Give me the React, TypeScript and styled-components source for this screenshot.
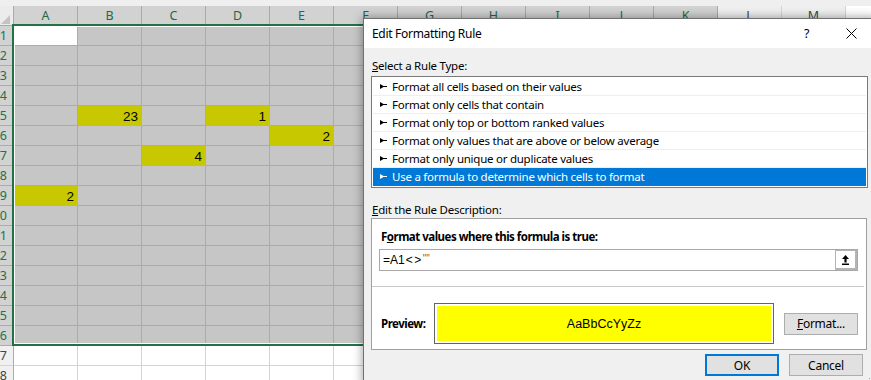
import React from "react";
import styled, { createGlobalStyle } from "styled-components";

const GlobalStyle = createGlobalStyle`
  html, body { margin: 0; padding: 0; }
  body {
    width: 871px; height: 380px; overflow: hidden; background: #ffffff;
    font-family: "Noto Sans", "Open Sans", sans-serif;
  }
`;

const COLS = ["A", "B", "C", "D", "E", "F", "G", "H", "I", "J", "K", "L", "M"];
const SEL_COLS = 11;
const ROWS = 18;
const SEL_ROWS = 16;
const VALUES: Record<string, number> = { B5: 23, D5: 1, E6: 2, C7: 4, A9: 2 };

const RULES = [
  "Format all cells based on their values",
  "Format only cells that contain",
  "Format only top or bottom ranked values",
  "Format only values that are above or below average",
  "Format only unique or duplicate values",
  "Use a formula to determine which cells to format",
];

const Screen = styled.div`
  position: relative;
  width: 871px;
  height: 380px;
  overflow: hidden;
  background: #ffffff;
`;

const TopStrip = styled.div`
  height: 6px;
  background: #efefef;
`;

const Sheet = styled.div`
  display: grid;
  grid-template-columns: 14px repeat(13, 64px);
  grid-auto-rows: 20px;
  font-family: "Noto Sans", sans-serif;
`;

const Corner = styled.div`
  box-sizing: border-box;
  background: #ececec;
  border-right: 1px solid #ababab;
  border-bottom: 1px solid #ababab;
  display: flex;
  align-items: flex-end;
  justify-content: flex-end;
  padding: 0 3px 1px 0;
`;

const ColHead = styled.div<{ $sel: boolean }>`
  box-sizing: border-box;
  background: ${(p) => (p.$sel ? "#d2d2d2" : "#f0f0f0")};
  border-right: 1px solid ${(p) => (p.$sel ? "#a9a9a9" : "#d4d4d4")};
  border-bottom: 1px solid #ababab;
  color: ${(p) => (p.$sel ? "#1d6b40" : "#444444")};
  font-size: 12.5px;
  display: flex;
  align-items: center;
  justify-content: center;
`;

const RowHead = styled.div<{ $sel: boolean }>`
  box-sizing: border-box;
  overflow: hidden;
  white-space: nowrap;
  background: ${(p) => (p.$sel ? "#d2d2d2" : "#f0f0f0")};
  border-right: 1px solid #ababab;
  border-bottom: 1px solid ${(p) => (p.$sel ? "#ababab" : "#d4d4d4")};
  color: ${(p) => (p.$sel ? "#217346" : "#444444")};
  font-size: 12.5px;
  display: flex;
  align-items: center;
  justify-content: flex-end;
  padding-right: 6px;
`;

const Cell = styled.div<{ $sel: boolean; $hl: boolean; $active: boolean }>`
  box-sizing: border-box;
  background: ${(p) => (p.$active ? "#ffffff" : p.$hl ? "#c8c800" : p.$sel ? "#c6c6c6" : "#ffffff")};
  border-right: 1px solid ${(p) => (p.$hl ? "#c8c800" : p.$sel ? "#ababab" : "#d4d4d4")};
  border-bottom: 1px solid ${(p) => (p.$hl ? "#c8c800" : p.$sel ? "#ababab" : "#d4d4d4")};
  font-family: "Liberation Sans", Arial, sans-serif;
  font-size: 13.5px;
  color: #000;
  display: flex;
  align-items: center;
  justify-content: flex-end;
  padding: 1px 3px 0 0;
`;

const Selection = styled.div`
  position: absolute;
  left: 12px;
  top: 24px;
  width: 708px;
  height: 322px;
  box-sizing: border-box;
  border: 2px solid #217346;
  box-shadow: inset 0 0 0 1px #ffffff;
  pointer-events: none;
`;

const Dialog = styled.div`
  position: absolute;
  left: 363px;
  top: 18px;
  width: 514px;
  height: 366px;
  box-sizing: border-box;
  border: 1px solid #707070;
  background: #f0f0f0;
  box-shadow: 0 0 9px 1px rgba(0, 0, 0, 0.35);
  display: flex;
  flex-direction: column;
  font-family: "Noto Sans", "Open Sans", sans-serif;
  font-size: 11.5px;
  letter-spacing: -0.25px;
  color: #000;
`;

const TitleBar = styled.div`
  height: 29px;
  background: #ffffff;
  display: flex;
  align-items: center;
  padding: 0 2px 0 8px;
  flex-shrink: 0;
`;

const Title = styled.div`
  flex: 1;
  font-size: 12px;
  letter-spacing: -0.3px;
`;

const TitleButton = styled.div`
  width: 45px;
  height: 29px;
  display: flex;
  align-items: center;
  justify-content: center;
  font-size: 12.5px;
`;

const Body = styled.div`
  flex: 1;
  display: flex;
  flex-direction: column;
  padding: 0 8px 0 7px;
`;

const SectionLabel = styled.div<{ $top: number }>`
  margin-top: ${(p) => p.$top}px;
  padding-left: 1px;
  line-height: 16px;
  height: 16px;
`;

const RuleList = styled.div`
  margin-top: 2px;
  border: 1px solid #7a7a7a;
  padding: 1px;
  background: #ffffff;
  display: flex;
  flex-direction: column;
`;

const RuleItem = styled.div<{ $selected: boolean }>`
  box-sizing: border-box;
  height: 18px;
  display: flex;
  align-items: center;
  gap: 5px;
  padding-left: 7px;
  background: ${(p) => (p.$selected ? "#0078d7" : "transparent")};
  color: ${(p) => (p.$selected ? "#ffffff" : "#000000")};
  border-bottom: 1px solid ${(p) => (p.$selected ? "#0078d7" : "#eeeeee")};
  white-space: nowrap;
`;

const DescPanel = styled.div`
  margin-right: 1px;
  border: 1px solid #a0a0a0;
  background: #ffffff;
  display: flex;
  flex-direction: column;
`;

const BoldLabel = styled.div`
  margin: 10px 0 0 9px;
  line-height: 16px;
  height: 16px;
  font-weight: 700;
  letter-spacing: -0.5px;
`;

const FormulaInput = styled.div`
  margin: 4px 8px 0 7px;
  height: 22px;
  box-sizing: border-box;
  border: 1px solid #a8a8a8;
  display: flex;
  align-items: center;
  padding-left: 3px;
  font-family: "Liberation Sans", Arial, sans-serif;
  font-size: 12px;
  letter-spacing: 0;
`;

const Ops = styled.span`
  letter-spacing: 1.5px;
  padding-left: 1px;
`;

const Quotes = styled.span`
  color: #b4532a;
  font-size: 10px;
  position: relative;
  top: -2px;
`;

const RefButton = styled.div`
  margin-left: auto;
  width: 22px;
  height: 20px;
  box-sizing: border-box;
  border: 1px solid #b4b4b4;
  border-right-width: 2px;
  border-bottom-width: 2px;
  background: #ffffff;
  display: flex;
  align-items: center;
  justify-content: center;
`;

const Separator = styled.div`
  height: 1px;
  background: #c8c8c8;
  margin: 15px 2px 0 0;
`;

const PreviewRow = styled.div`
  display: flex;
  align-items: center;
  margin: 16px 8px 5px 9px;
`;

const PreviewLabel = styled.div`
  width: 53px;
  font-weight: 700;
  letter-spacing: -0.5px;
`;

const PreviewBox = styled.div`
  width: 340px;
  height: 41px;
  box-sizing: border-box;
  border: 1px solid #646464;
  padding: 2px;
  background: #ffffff;
`;

const PreviewFill = styled.div`
  height: 100%;
  background: #ffff00;
  display: flex;
  align-items: center;
  justify-content: center;
  font-family: "Liberation Sans", Arial, sans-serif;
  font-size: 12.5px;
  letter-spacing: 0;
`;

const DialogButton = styled.div<{ $default?: boolean }>`
  width: 74px;
  height: 22px;
  box-sizing: border-box;
  background: #e1e1e1;
  border: ${(p) => (p.$default ? "2px solid #0078d7" : "1px solid #adadad")};
  display: flex;
  align-items: center;
  justify-content: center;
  font-size: 12px;
`;

const FormatButton = styled(DialogButton)`
  margin-left: auto;
`;

const ButtonRow = styled.div`
  display: flex;
  justify-content: flex-end;
  gap: 10px;
  margin-top: 4px;
  padding-right: 5px;
`;

const Grip = styled.div`
  position: absolute;
  right: 2px;
  bottom: 2px;
  width: 10px;
  height: 10px;
`;

const RuleArrow = () => (
  <svg width="7" height="5" viewBox="0 0 7 5">
    <path d="M0 0 L3.5 2 L7 2 L7 3 L3.5 3 L0 5 Z" fill="currentColor" />
  </svg>
);

const UpArrow = () => (
  <svg width="7" height="10" viewBox="0 0 7 10">
    <path d="M3.5 0 L7 4 L4.6 4 L4.6 7.5 L2.4 7.5 L2.4 4 L0 4 Z" fill="#000" />
    <rect x="0" y="8.5" width="7" height="1.5" fill="#000" />
  </svg>
);

const CloseIcon = () => (
  <svg width="11" height="11" viewBox="0 0 11 11">
    <path d="M0.5 0.5 L10.5 10.5 M10.5 0.5 L0.5 10.5" stroke="#000" strokeWidth="1" fill="none" />
  </svg>
);

const CornerTriangle = () => (
  <svg width="9" height="9" viewBox="0 0 9 9">
    <path d="M9 0 L9 9 L0 9 Z" fill="#c3c3c3" />
  </svg>
);

const GripDots = () => (
  <svg width="10" height="10" viewBox="0 0 10 10">
    {[
      [8, 2],
      [5, 5],
      [8, 5],
      [2, 8],
      [5, 8],
      [8, 8],
    ].map(([x, y], i) => (
      <rect key={i} x={x} y={y} width="1" height="1" fill="#9a9a9a" />
    ))}
  </svg>
);

export default function App() {
  const cells: React.ReactNode[] = [];
  cells.push(
    <Corner key="corner">
      <CornerTriangle />
    </Corner>
  );
  COLS.forEach((c, i) => {
    cells.push(
      <ColHead key={`h${c}`} $sel={i < SEL_COLS}>
        {c}
      </ColHead>
    );
  });
  for (let r = 1; r <= ROWS; r++) {
    const rowSel = r <= SEL_ROWS;
    cells.push(
      <RowHead key={`r${r}`} $sel={rowSel}>
        {r}
      </RowHead>
    );
    COLS.forEach((c, i) => {
      const key = `${c}${r}`;
      const v = VALUES[key];
      const sel = rowSel && i < SEL_COLS;
      cells.push(
        <Cell key={key} $sel={sel} $hl={v !== undefined} $active={key === "A1"}>
          {v}
        </Cell>
      );
    });
  }

  return (
    <Screen>
      <GlobalStyle />
      <TopStrip />
      <Sheet>{cells}</Sheet>
      <Selection />
      <Dialog>
        <TitleBar>
          <Title>Edit Formatting Rule</Title>
          <TitleButton>?</TitleButton>
          <TitleButton>
            <CloseIcon />
          </TitleButton>
        </TitleBar>
        <Body>
          <SectionLabel $top={10}>
            <u>S</u>elect a Rule Type:
          </SectionLabel>
          <RuleList>
            {RULES.map((rule, i) => (
              <RuleItem key={rule} $selected={i === RULES.length - 1}>
                <RuleArrow />
                <span>{rule}</span>
              </RuleItem>
            ))}
          </RuleList>
          <SectionLabel $top={14}>
            <u>E</u>dit the Rule Description:
          </SectionLabel>
          <DescPanel>
            <BoldLabel>
              F<u>o</u>rmat values where this formula is true:
            </BoldLabel>
            <FormulaInput>
              =A1<Ops>&lt;&gt;</Ops>
              <Quotes>""</Quotes>
              <RefButton>
                <UpArrow />
              </RefButton>
            </FormulaInput>
            <Separator />
            <PreviewRow>
              <PreviewLabel>Preview:</PreviewLabel>
              <PreviewBox>
                <PreviewFill>AaBbCcYyZz</PreviewFill>
              </PreviewBox>
              <FormatButton>
                <u>F</u>ormat...
              </FormatButton>
            </PreviewRow>
          </DescPanel>
          <ButtonRow>
            <DialogButton $default>OK</DialogButton>
            <DialogButton>Cancel</DialogButton>
          </ButtonRow>
        </Body>
        <Grip>
          <GripDots />
        </Grip>
      </Dialog>
    </Screen>
  );
}
